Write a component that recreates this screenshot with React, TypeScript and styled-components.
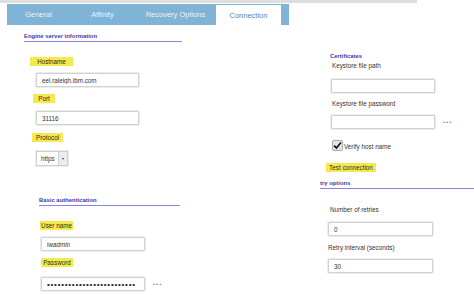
import React from 'react';
import styled, { createGlobalStyle } from 'styled-components';

const GlobalStyle = createGlobalStyle`
  html, body {
    margin: 0;
    padding: 0;
    background: #fff;
    font-family: "Liberation Sans", Arial, sans-serif;
  }
`;

const Page = styled.div`
  width: 474px;
  height: 295px;
  overflow: hidden;
  background: #fff;
`;

const TopStrip = styled.div`
  width: 417px;
  height: 3px;
  background: #dedede;
`;

const TabBar = styled.div`
  display: flex;
  align-items: flex-end;
  margin: 1px 0 0 7px;
  width: 282px;
  height: 21px;
  background: #80b4d6;
`;

const Tab = styled.div<{ $w: number; $active?: boolean }>`
  width: ${(p) => p.$w}px;
  height: ${(p) => (p.$active ? 20 : 21)}px;
  display: flex;
  align-items: center;
  justify-content: center;
  font-size: 7.5px;
  color: ${(p) => (p.$active ? '#5a84ab' : '#eaf2f8')};
  background: ${(p) => (p.$active ? '#fff' : 'transparent')};
`;

const Body = styled.div`
  display: flex;
`;

const Column = styled.div<{ $w?: number }>`
  display: flex;
  flex-direction: column;
  align-items: flex-start;
  width: ${(p) => (p.$w ? `${p.$w}px` : 'auto')};
  flex: ${(p) => (p.$w ? 'none' : '1')};
`;

const SectionTitle = styled.div<{ $top: number; $indent: number; $w?: number; $line?: boolean }>`
  margin: ${(p) => p.$top}px 0 0 ${(p) => p.$indent}px;
  width: ${(p) => (p.$w ? `${p.$w}px` : 'auto')};
  font-size: 5.9px;
  font-weight: bold;
  line-height: 8px;
  color: #3b3ba6;
  padding-bottom: ${(p) => (p.$line ? 1 : 0)}px;
  border-bottom: ${(p) => (p.$line ? '1.5px solid #8686dc' : 'none')};
  white-space: nowrap;
`;

const Highlight = styled.div<{ $top: number; $indent: number; $w: number }>`
  margin: ${(p) => p.$top}px 0 0 ${(p) => p.$indent}px;
  width: ${(p) => p.$w}px;
  height: 9px;
  background: #f4e94e;
  font-size: 6.3px;
  line-height: 9px;
  text-align: center;
  color: #2e2e1a;
  white-space: nowrap;
`;

const Label = styled.div<{ $top: number; $indent: number }>`
  margin: ${(p) => p.$top}px 0 0 ${(p) => p.$indent}px;
  font-size: 6.3px;
  line-height: 8px;
  color: #333;
  white-space: nowrap;
`;

const FieldRow = styled.div<{ $top: number; $indent: number }>`
  display: flex;
  align-items: center;
  gap: 6px;
  margin: ${(p) => p.$top}px 0 0 ${(p) => p.$indent}px;
`;

const TextBox = styled.input<{ $w: number }>`
  width: ${(p) => p.$w}px;
  height: 14px;
  box-sizing: border-box;
  margin: 0;
  padding: 0 5px;
  border: 1px solid #d2d2d2;
  box-shadow: 0 0 0 1px #ececec;
  border-radius: 1px;
  font-family: "Liberation Sans", Arial, sans-serif;
  font-size: 6.3px;
  color: #333;
  background: #fff;
  outline: none;
`;

const Secret = styled(TextBox)`
  font-size: 8px;
  letter-spacing: 0.75px;
  color: #222;
`;

const More = styled.span`
  font-size: 6px;
  letter-spacing: 1px;
  color: #888;
  margin-left: 2px;
`;

const Select = styled.div`
  display: flex;
  width: 32px;
  height: 15px;
  box-sizing: border-box;
  border: 1px solid #cfcfcf;
  box-shadow: 0 0 0 1px #ececec;
  background: #fff;
`;

const SelectValue = styled.div`
  flex: 1;
  font-size: 6.3px;
  line-height: 13px;
  padding-left: 4px;
  color: #333;
`;

const SelectArrow = styled.div`
  width: 8px;
  display: flex;
  align-items: center;
  justify-content: center;
  background: #ececec;
  border-left: 1px solid #d0d0d0;
  &::after {
    content: '';
    border-left: 1.5px solid transparent;
    border-right: 1.5px solid transparent;
    border-top: 2px solid #444;
  }
`;

const CheckRow = styled.div<{ $top: number; $indent: number }>`
  display: flex;
  align-items: flex-end;
  gap: 1px;
  margin: ${(p) => p.$top}px 0 0 ${(p) => p.$indent}px;
  font-size: 6.3px;
  line-height: 8px;
  color: #333;
`;

const CheckBox = styled.div`
  width: 11px;
  height: 11px;
  box-sizing: border-box;
  border: 1px solid #aaa;
  border-radius: 2px;
  background: #e6e6e6;
  display: flex;
  align-items: center;
  justify-content: center;
`;

export default function App() {
  return (
    <Page>
      <GlobalStyle />
      <TopStrip />
      <TabBar>
        <Tab $w={63}>General</Tab>
        <Tab $w={65}>Affinity</Tab>
        <Tab $w={81}>Recovery Options</Tab>
        <Tab $w={65} $active>Connection</Tab>
      </TabBar>
      <Body>
        <Column $w={320}>
          <SectionTitle $top={7} $indent={24} $w={158} $line>Engine server information</SectionTitle>
          <Highlight $top={15} $indent={30} $w={43}>Hostname</Highlight>
          <FieldRow $top={7} $indent={36}>
            <TextBox $w={103} readOnly value="eel.raleigh.ibm.com" />
          </FieldRow>
          <Highlight $top={7} $indent={33} $w={22}>Port</Highlight>
          <FieldRow $top={8} $indent={36}>
            <TextBox $w={103} readOnly value="31116" />
          </FieldRow>
          <Highlight $top={8} $indent={32} $w={31}>Protocol</Highlight>
          <FieldRow $top={9} $indent={36}>
            <Select>
              <SelectValue>https</SelectValue>
              <SelectArrow />
            </Select>
          </FieldRow>
          <SectionTitle $top={30} $indent={39} $w={141} $line>Basic authentication</SectionTitle>
          <Highlight $top={15} $indent={40} $w={33}>User name</Highlight>
          <FieldRow $top={7} $indent={41}>
            <TextBox $w={104} readOnly value="iwadmin" />
          </FieldRow>
          <Highlight $top={7} $indent={41} $w={32}>Password</Highlight>
          <FieldRow $top={10} $indent={41}>
            <Secret $w={104} readOnly value={'•'.repeat(25)} />
            <More>•••</More>
          </FieldRow>
        </Column>
        <Column>
          <SectionTitle $top={27} $indent={10}>Certificates</SectionTitle>
          <Label $top={2} $indent={12}>Keystore file path</Label>
          <FieldRow $top={9} $indent={11}>
            <TextBox $w={104} readOnly value="" />
          </FieldRow>
          <Label $top={7} $indent={12}>Keystore file password</Label>
          <FieldRow $top={7} $indent={11}>
            <TextBox $w={104} readOnly value="" />
            <More>•••</More>
          </FieldRow>
          <CheckRow $top={11} $indent={12}>
            <CheckBox>
              <svg width="10" height="9" viewBox="0 0 10 9">
                <path d="M1.2 4.6 L3.8 7.2 L8.8 1.2" fill="none" stroke="#111" strokeWidth="1.8" />
              </svg>
            </CheckBox>
            <span>Verify host name</span>
          </CheckRow>
          <Highlight $top={12} $indent={6} $w={50}>Test connection</Highlight>
          <SectionTitle $top={7} $indent={0} $w={154} $line>try options</SectionTitle>
          <Label $top={17} $indent={10}>Number of retries</Label>
          <FieldRow $top={8} $indent={8}>
            <TextBox $w={105} readOnly value="0" />
          </FieldRow>
          <Label $top={8} $indent={8}>Retry interval (seconds)</Label>
          <FieldRow $top={7} $indent={8}>
            <TextBox $w={105} readOnly value="30" />
          </FieldRow>
        </Column>
      </Body>
    </Page>
  );
}
